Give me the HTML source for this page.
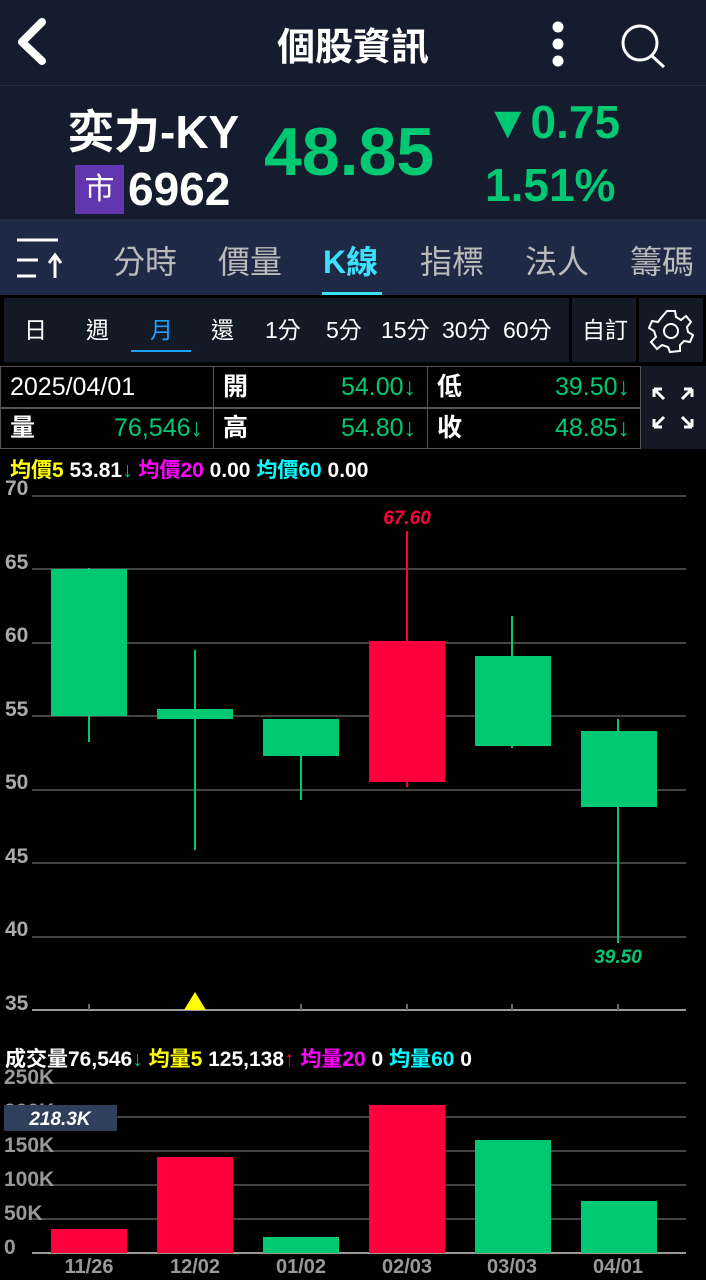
<!DOCTYPE html>
<html><head><meta charset="utf-8"><style>
*{margin:0;padding:0;box-sizing:border-box}
body{width:706px;height:1280px;background:#000;overflow:hidden;font-family:"Liberation Sans","Noto Sans CJK TC",sans-serif;color:#fff;position:relative}
.abs{position:absolute}
</style></head><body>
<div class="abs" style="left:0;top:0;width:706px;height:85px;background:#141c2e"></div>
<svg class="abs" style="left:0;top:0" width="706" height="85">
<path d="M42 22 L22 42 L42 61" stroke="#fff" stroke-width="8" fill="none" stroke-linecap="round" stroke-linejoin="round"/>
<circle cx="558" cy="27" r="5.5" fill="#fff"/><circle cx="558" cy="44" r="5.5" fill="#fff"/><circle cx="558" cy="61" r="5.5" fill="#fff"/>
<circle cx="640" cy="43" r="17" stroke="#fff" stroke-width="3" fill="none"/>
<path d="M652 56 L664 67" stroke="#fff" stroke-width="3"/>
</svg>
<div class="abs" style="left:0;top:16px;width:706px;text-align:center;font-size:38px;font-weight:bold">個股資訊</div>
<div class="abs" style="left:0;top:85px;width:706px;height:134px;background:#141c2e;border-top:1px solid #1d2d48"></div>
<div class="abs" style="left:68px;top:96px;font-size:46px;font-weight:bold">奕力-KY</div>
<div class="abs" style="left:75px;top:165px;width:49px;height:49px;background:#6236b0;font-size:30px;text-align:center;line-height:49px">市</div>
<div class="abs" style="left:128px;top:162px;font-size:46px;font-weight:bold">6962</div>
<div class="abs" style="left:264px;top:113px;font-size:68px;font-weight:bold;color:#00c873">48.85</div>
<div class="abs" style="left:485px;top:95px;font-size:46px;font-weight:bold;color:#00c873">▼0.75</div>
<div class="abs" style="left:485px;top:158px;font-size:46px;font-weight:bold;color:#00c873">1.51%</div>
<div class="abs" style="left:0;top:219px;width:706px;height:76px;background:#1e2a45"></div>
<svg class="abs" style="left:14px;top:236px" width="50" height="44"><path d="M3 4H44M3 24H24M3 40H22" stroke="#fff" stroke-width="3"/><path d="M41 42V20M35 27L41 19L47 27" stroke="#fff" stroke-width="3" fill="none"/></svg>
<div class="abs" style="left:113px;top:237px;font-size:32px;color:#bbb">分時</div>
<div class="abs" style="left:218px;top:237px;font-size:32px;color:#bbb">價量</div>
<div class="abs" style="left:323px;top:237px;font-size:32px;color:#3ee0ff;font-weight:bold">K線</div>
<div class="abs" style="left:322px;top:292px;width:60px;height:3px;background:#3ee0ff"></div>
<div class="abs" style="left:420px;top:237px;font-size:32px;color:#bbb">指標</div>
<div class="abs" style="left:525px;top:237px;font-size:32px;color:#bbb">法人</div>
<div class="abs" style="left:630px;top:237px;font-size:32px;color:#bbb">籌碼</div>
<div class="abs" style="left:4px;top:298px;width:565px;height:64px;background:#131a26"></div>
<div class="abs" style="left:572px;top:298px;width:64px;height:64px;background:#131a26"></div>
<div class="abs" style="left:639px;top:298px;width:64px;height:64px;background:#131a26"></div>
<div class="abs" style="top:311px;left:0;font-size:23px;white-space:nowrap">
<span class="abs" style="left:24px">日</span><span class="abs" style="left:86px">週</span><span class="abs" style="left:150px;color:#1ea0ff">月</span><span class="abs" style="left:211px">還</span><span class="abs" style="left:265px">1分</span><span class="abs" style="left:326px">5分</span><span class="abs" style="left:381px">15分</span><span class="abs" style="left:442px">30分</span><span class="abs" style="left:503px">60分</span><span class="abs" style="left:582px">自訂</span></div>
<div class="abs" style="left:131px;top:350px;width:60px;height:2px;background:#1ea0ff"></div>
<svg class="abs" style="left:648px;top:308px" width="46" height="46" viewBox="-23 -23 46 46"><path d="M-4 -20H4L5 -14L10 -11L15 -15L20 -9L16 -4L17 1L22 4L19 11L13 10L9 14L9 20L-1 21L-3 16L-9 14L-14 18L-20 11L-15 6L-17 0L-22 -3L-19 -10L-13 -9L-10 -13Z" fill="none" stroke="#fff" stroke-width="2"/><circle r="7" fill="none" stroke="#fff" stroke-width="2"/></svg>
<div class="abs" style="left:0;top:366px;width:641px;height:83px;background:#000;border:1px solid #555"></div>
<div class="abs" style="left:213px;top:366px;width:1px;height:83px;background:#555"></div>
<div class="abs" style="left:427px;top:366px;width:1px;height:83px;background:#555"></div>
<div class="abs" style="left:0;top:407px;width:641px;height:2px;background:#555"></div>
<div class="abs" style="left:641px;top:366px;width:65px;height:83px;background:#131a26"></div>
<svg class="abs" style="left:650px;top:385px" width="46" height="46"><path d="M4 4L14 14M4 4V12M4 4H12M42 4L32 14M42 4V12M42 4H34M4 42L14 32M4 42V34M4 42H12M42 42L32 32M42 42V34M42 42H34" stroke="#fff" stroke-width="3" fill="none"/></svg>
<div style="font-size:25px;line-height:30px">
<span class="abs" style="left:10px;top:372px">2025/04/01</span>
<span class="abs" style="left:223px;top:372px;font-weight:bold">開</span><span class="abs" style="right:290px;top:372px;color:#00c873">54.00↓</span>
<span class="abs" style="left:437px;top:372px;font-weight:bold">低</span><span class="abs" style="right:76px;top:372px;color:#00c873">39.50↓</span>
<span class="abs" style="left:10px;top:413px;font-weight:bold">量</span><span class="abs" style="right:503px;top:413px;color:#00c873">76,546↓</span>
<span class="abs" style="left:223px;top:413px;font-weight:bold">高</span><span class="abs" style="right:290px;top:413px;color:#00c873">54.80↓</span>
<span class="abs" style="left:437px;top:413px;font-weight:bold">收</span><span class="abs" style="right:76px;top:413px;color:#00c873">48.85↓</span>
</div>
<div class="abs" style="left:10px;top:454px;font-size:21px;font-weight:bold;white-space:nowrap"><span style="color:#ff0">均價5</span> 53.81<span style="color:#00c873">↓</span> <span style="color:#f0f">均價20</span> 0.00 <span style="color:#0ff">均價60</span> 0.00</div>
<svg class="abs" style="left:0;top:0" width="706" height="1280" font-family="Liberation Sans,sans-serif" font-weight="bold">
<g stroke="#444" stroke-width="2">
<line x1="32" y1="496" x2="686" y2="496"/><line x1="32" y1="569" x2="686" y2="569"/><line x1="32" y1="643" x2="686" y2="643"/><line x1="32" y1="716" x2="686" y2="716"/><line x1="32" y1="790" x2="686" y2="790"/><line x1="32" y1="863" x2="686" y2="863"/><line x1="32" y1="937" x2="686" y2="937"/>
</g>
<line x1="32" y1="1010" x2="686" y2="1010" stroke="#999" stroke-width="2"/>
<g stroke="#666" stroke-width="2"><line x1="89" y1="1004" x2="89" y2="1010"/><line x1="195" y1="1004" x2="195" y2="1010"/><line x1="301" y1="1004" x2="301" y2="1010"/><line x1="407" y1="1004" x2="407" y2="1010"/><line x1="512" y1="1004" x2="512" y2="1010"/><line x1="618" y1="1004" x2="618" y2="1010"/></g>
<g fill="#aaa" font-size="21"><text x="5" y="495">70</text><text x="5" y="569">65</text><text x="5" y="642">60</text><text x="5" y="716">55</text><text x="5" y="789">50</text><text x="5" y="863">45</text><text x="5" y="936">40</text><text x="5" y="1010">35</text></g>
<g stroke="#00c873" stroke-width="2"><line x1="89" y1="568" x2="89" y2="742"/><line x1="195" y1="650" x2="195" y2="850"/><line x1="301" y1="719" x2="301" y2="800"/><line x1="512" y1="616" x2="512" y2="748"/><line x1="618" y1="719" x2="618" y2="943"/></g>
<line x1="407" y1="531" x2="407" y2="787" stroke="#ff003c" stroke-width="2"/>
<g fill="#00c873"><rect x="51" y="569" width="76" height="147"/><rect x="157" y="709" width="76" height="10"/><rect x="263" y="719" width="76" height="37"/><rect x="475" y="656" width="76" height="90"/><rect x="581" y="731" width="76" height="76"/></g>
<rect x="369" y="641" width="76" height="141" fill="#ff003c"/>
<text x="407" y="524" fill="#ff003c" font-size="19" font-style="italic" text-anchor="middle">67.60</text>
<text x="618" y="963" fill="#00c873" font-size="19" font-style="italic" text-anchor="middle">39.50</text>
<path d="M195 992L184 1010H206Z" fill="#ff0"/>
<g stroke="#444" stroke-width="2"><line x1="32" y1="1083" x2="686" y2="1083"/><line x1="32" y1="1117" x2="686" y2="1117"/><line x1="32" y1="1151" x2="686" y2="1151"/><line x1="32" y1="1185" x2="686" y2="1185"/><line x1="32" y1="1219" x2="686" y2="1219"/></g>
<line x1="32" y1="1253" x2="686" y2="1253" stroke="#999" stroke-width="2"/>
<g fill="#999" font-size="21"><text x="4" y="1084">250K</text><text x="4" y="1118">200K</text><text x="4" y="1152">150K</text><text x="4" y="1186">100K</text><text x="4" y="1220">50K</text><text x="4" y="1254">0</text></g>
<rect x="4" y="1105" width="113" height="26" fill="#2f3f5c"/>
<text x="60" y="1125" fill="#fff" font-size="19" font-style="italic" text-anchor="middle">218.3K</text>
<g fill="#ff003c"><rect x="51" y="1229" width="76" height="24"/><rect x="157" y="1157" width="76" height="96"/><rect x="369" y="1105" width="76" height="148"/></g>
<g fill="#00c873"><rect x="263" y="1237" width="76" height="16"/><rect x="475" y="1140" width="76" height="113"/><rect x="581" y="1201" width="76" height="52"/></g>
<g fill="#999" font-size="20" text-anchor="middle"><text x="89" y="1273">11/26</text><text x="195" y="1273">12/02</text><text x="301" y="1273">01/02</text><text x="407" y="1273">02/03</text><text x="512" y="1273">03/03</text><text x="618" y="1273">04/01</text></g>
</svg>
<div class="abs" style="left:5px;top:1043px;font-size:21px;font-weight:bold;white-space:nowrap">成交量76,546<span style="color:#00c873">↓</span> <span style="color:#ff0">均量5</span> 125,138<span style="color:#ff003c">↑</span> <span style="color:#f0f">均量20</span> 0 <span style="color:#0ff">均量60</span> 0</div>
</body></html>
